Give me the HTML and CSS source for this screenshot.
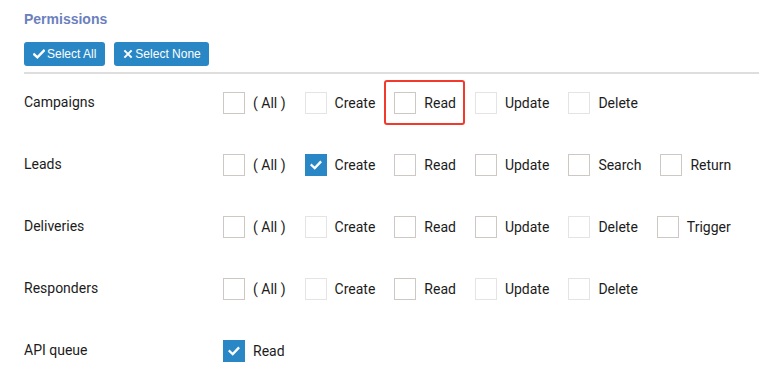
FILE: index.html
```html
<!DOCTYPE html>
<html>
<head>
<meta charset="utf-8">
<link rel="stylesheet" href="styles.css">
</head>
<body>
<div class="panel">
  <h2 class="title">Permissions</h2>
  <div class="toolbar">
    <button class="btn"><svg class="ico" viewBox="0 0 12 12"><path d="M1.2 6.4 L4.4 9.4 L10.8 2.8" fill="none" stroke="#fff" stroke-width="2.4" stroke-linecap="square"/></svg>Select All</button>
    <button class="btn btn-none"><svg class="ico x" viewBox="0 0 12 12"><path d="M2.5 2.5 L9.5 9.5 M9.5 2.5 L2.5 9.5" fill="none" stroke="#fff" stroke-width="2.4" stroke-linecap="square"/></svg>Select None</button>
  </div>
  <div class="rows">
    <div class="row">
      <div class="name">Campaigns</div>
      <div class="opts">
        <label class="opt"><span class="box"></span>( All )</label>
        <label class="opt"><span class="box light"></span>Create</label>
        <label class="opt mark"><span class="box"></span>Read</label>
        <label class="opt"><span class="box light"></span>Update</label>
        <label class="opt"><span class="box light"></span>Delete</label>
      </div>
    </div>
    <div class="row">
      <div class="name">Leads</div>
      <div class="opts">
        <label class="opt"><span class="box"></span>( All )</label>
        <label class="opt"><span class="box on"><svg viewBox="0 0 12 12"><path d="M2.3 6.2 L4.9 8.6 L9.7 3.6" fill="none" stroke="#fff" stroke-width="2" stroke-linecap="square"/></svg></span>Create</label>
        <label class="opt"><span class="box"></span>Read</label>
        <label class="opt"><span class="box"></span>Update</label>
        <label class="opt"><span class="box"></span>Search</label>
        <label class="opt"><span class="box"></span>Return</label>
      </div>
    </div>
    <div class="row">
      <div class="name">Deliveries</div>
      <div class="opts">
        <label class="opt"><span class="box"></span>( All )</label>
        <label class="opt"><span class="box light"></span>Create</label>
        <label class="opt"><span class="box"></span>Read</label>
        <label class="opt"><span class="box"></span>Update</label>
        <label class="opt"><span class="box light"></span>Delete</label>
        <label class="opt"><span class="box"></span>Trigger</label>
      </div>
    </div>
    <div class="row">
      <div class="name">Responders</div>
      <div class="opts">
        <label class="opt"><span class="box"></span>( All )</label>
        <label class="opt"><span class="box light"></span>Create</label>
        <label class="opt"><span class="box"></span>Read</label>
        <label class="opt"><span class="box light"></span>Update</label>
        <label class="opt"><span class="box light"></span>Delete</label>
      </div>
    </div>
    <div class="row">
      <div class="name">API queue</div>
      <div class="opts">
        <label class="opt"><span class="box on"><svg viewBox="0 0 12 12"><path d="M2.3 6.2 L4.9 8.6 L9.7 3.6" fill="none" stroke="#fff" stroke-width="2" stroke-linecap="square"/></svg></span>Read</label>
      </div>
    </div>
  </div>
</div>
</body>
</html>
```

FILE: styles.css
```css
html, body {
  margin: 0;
  padding: 0;
  background: #fff;
}
.panel {
  padding: 11px 0 0 24px;
  font-family: Roboto, "Liberation Sans", sans-serif;
  color: #1c1c1c;
}
.title {
  margin: 0;
  font-family: "Liberation Sans", Arial, sans-serif;
  font-weight: bold;
  font-size: 14px;
  line-height: 16px;
  color: #6b80bd;
}
.toolbar {
  margin-top: 15px;
  display: flex;
  gap: 9px;
  padding-bottom: 6px;
  border-bottom: 2px solid #dedede;
}
.btn {
  display: flex;
  align-items: center;
  height: 24px;
  padding: 0 9px 0 9px;
  border: 0;
  border-radius: 3px;
  background: #2a87c6;
  color: #fff;
  font-family: "Liberation Sans", Arial, sans-serif;
  font-size: 12px;
}
.btn-none {
  padding-right: 8px;
}
.ico {
  width: 12px;
  height: 12px;
  margin-right: 2px;
}
.ico.x {
  width: 10px;
  height: 10px;
}
.rows {
  padding-top: 18px;
  display: flex;
  flex-direction: column;
  gap: 40px;
}
.row {
  display: flex;
  align-items: center;
  height: 22px;
  font-size: 14px;
}
.name {
  width: 199px;
  flex: none;
  position: relative;
  top: -1px;
}
.opts {
  display: flex;
  align-items: center;
  gap: 19px;
}
.opt {
  display: flex;
  align-items: center;
  gap: 8px;
  position: relative;
}
.box {
  width: 20px;
  height: 20px;
  border: 1px solid #cdc8c3;
  display: inline-flex;
  align-items: center;
  justify-content: center;
  flex: none;
}
.box.light {
  border-color: #e4e4e4;
}
.box.on {
  background: #2a87c6;
  border-color: #2a87c6;
}
.box svg {
  width: 14px;
  height: 14px;
}
.mark::after {
  content: "";
  position: absolute;
  left: -10px;
  top: -12px;
  right: -9px;
  bottom: -11px;
  border: 2px solid #f23a2c;
  border-radius: 3px;
}
```
